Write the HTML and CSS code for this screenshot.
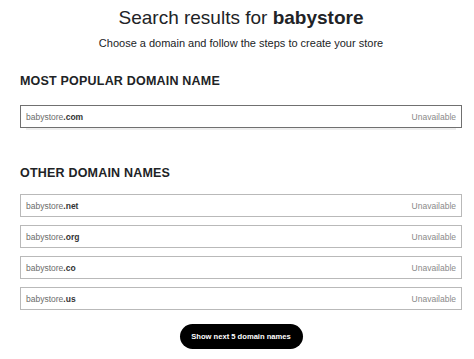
FILE: index.html
```html
<!DOCTYPE html>
<html lang="en">
<head>
    <meta charset="UTF-8">
    <meta name="viewport" content="width=device-width, initial-scale=1.0">
    <title>Search results for babystore</title>
    <link rel="stylesheet" href="styles.css">
</head>
<body>
    <main class="page">
        <!-- Заголовок поиска -->
        <header class="search-head">
            <h1>Search results for <strong>babystore</strong></h1>
            <p>Choose a domain and follow the steps to create your store</p>
        </header>

        <section class="group">
            <h2>MOST POPULAR DOMAIN NAME</h2>
            <div class="domain popular">
                <span class="name">babystore<b>.com</b></span>
                <span class="status">Unavailable</span>
            </div>
        </section>

        <section class="group other">
            <h2>OTHER DOMAIN NAMES</h2>
            <div class="list">
                <div class="domain">
                    <span class="name">babystore<b>.net</b></span>
                    <span class="status">Unavailable</span>
                </div>
                <div class="domain">
                    <span class="name">babystore<b>.org</b></span>
                    <span class="status">Unavailable</span>
                </div>
                <div class="domain">
                    <span class="name">babystore<b>.co</b></span>
                    <span class="status">Unavailable</span>
                </div>
                <div class="domain">
                    <span class="name">babystore<b>.us</b></span>
                    <span class="status">Unavailable</span>
                </div>
            </div>
        </section>

        <div class="more">
            <button type="button">Show next 5 domain names</button>
        </div>
    </main>
</body>
</html>
```

FILE: styles.css
```css
body {
    margin: 0;
    font-family: 'Liberation Sans', Arial, sans-serif;
    color: #212326;
    background: #fff;
}

.page {
    padding: 0 12px 0 20px;
}

.search-head {
    text-align: center;
    padding-top: 6px;
}

.search-head h1 {
    font-size: 19px;
    font-weight: 400;
    margin: 0;
    line-height: 24px;
}

.search-head h1 strong {
    font-weight: 700;
}

.search-head p {
    font-size: 11px;
    margin: 6px 0 0;
    line-height: 14px;
}

.group h2 {
    font-size: 12.5px;
    font-weight: 700;
    letter-spacing: 0.2px;
    margin: 23px 0 0;
    line-height: 16px;
}

.domain {
    box-sizing: border-box;
    display: flex;
    justify-content: space-between;
    align-items: center;
    height: 23px;
    padding: 0 5px;
    border: 1px solid #b9b9b9;
    font-size: 8.5px;
}

.domain .name {
    color: #6b6b6b;
}

.domain .name b {
    color: #333;
}

.domain .status {
    color: #8a8a8a;
}

.popular {
    margin-top: 16px;
    border: 1.5px solid #707070;
    box-shadow: 0 8px 0 -6px #eee;
}

.other h2 {
    margin-top: 37px;
}

.list {
    display: flex;
    flex-direction: column;
    gap: 8px;
    margin-top: 13px;
}

.more {
    display: flex;
    justify-content: center;
    margin-top: 14px;
}

.more button {
    background: #000;
    color: #fff;
    border: none;
    border-radius: 13px;
    height: 25px;
    width: 123px;
    padding: 0;
    white-space: nowrap;
    font-family: inherit;
    font-size: 7.6px;
    font-weight: 700;
}
```
